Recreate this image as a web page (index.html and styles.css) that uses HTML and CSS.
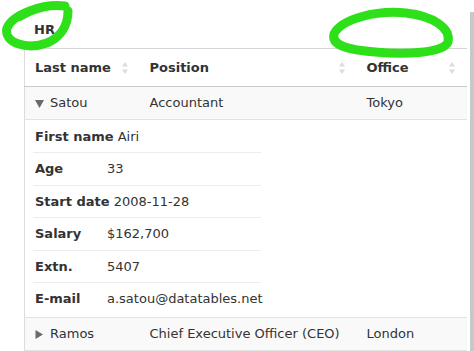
FILE: index.html
```html
<!DOCTYPE html>
<html>
<head>
<meta charset="utf-8">
<link rel="stylesheet" href="styles.css">
</head>
<body>
<div class="frame">
  <div class="content">
    <div class="title">HR</div>
    <table class="grid">
      <colgroup><col class="c1"><col class="c2"><col class="c3"></colgroup>
      <thead>
        <tr>
          <th><div class="th-in"><span>Last name</span><svg class="sort" width="6" height="12" viewBox="0 0 6 12"><path d="M3 0 L6 4.5 L0 4.5 Z M3 12 L6 7.5 L0 7.5 Z"/></svg></div></th>
          <th><div class="th-in"><span>Position</span><svg class="sort" width="6" height="12" viewBox="0 0 6 12"><path d="M3 0 L6 4.5 L0 4.5 Z M3 12 L6 7.5 L0 7.5 Z"/></svg></div></th>
          <th><div class="th-in"><span>Office</span><svg class="sort" width="6" height="12" viewBox="0 0 6 12"><path d="M3 0 L6 4.5 L0 4.5 Z M3 12 L6 7.5 L0 7.5 Z"/></svg></div></th>
        </tr>
      </thead>
      <tbody>
        <tr class="parent">
          <td><svg class="tog" width="9" height="8" viewBox="0 0 9 8"><path d="M0 0 L9 0 L4.5 8 Z"/></svg>Satou</td>
          <td>Accountant</td>
          <td>Tokyo</td>
        </tr>
        <tr class="child">
          <td colspan="3">
            <ul class="details">
              <li><b>First name</b>Airi</li>
              <li><b>Age</b>33</li>
              <li><b>Start date</b>2008-11-28</li>
              <li><b>Salary</b>$162,700</li>
              <li><b>Extn.</b>5407</li>
              <li><b>E-mail</b>a.satou@datatables.net</li>
            </ul>
          </td>
        </tr>
        <tr class="parent">
          <td><svg class="tog" width="9" height="9" viewBox="0 0 9 9"><path d="M0.5 0 L8 4.5 L0.5 9 Z"/></svg>Ramos</td>
          <td>Chief Executive Officer (CEO)</td>
          <td>London</td>
        </tr>
      </tbody>
    </table>
  </div>
  <div class="bar"></div>
</div>
<svg class="marks" width="474" height="351" viewBox="0 0 474 351">
  <path d="M65 6 C44 3 13 14 7 28 C3 43 27 50 47 43 C61 37 68 25 68 11" />
  <path class="thin" d="M20 19 C35 10 52 6 66 5" />
  <path d="M334 34 C341 19 376 10 406 13 C433 16 451 28 448 42 C444 53 405 55 375 52 C350 50 331 46 334 34 Z" />
</svg>
</body>
</html>
```

FILE: styles.css
```css
html, body {
  margin: 0;
  padding: 0;
  background: #fff;
}
body {
  font-family: "DejaVu Sans", Verdana, sans-serif;
  font-size: 13px;
  color: #333;
  position: relative;
  width: 474px;
  height: 351px;
  overflow: hidden;
}
.frame {
  display: flex;
  align-items: flex-start;
}
.content {
  flex: 0 0 442px;
  margin-left: 24px;
}
.bar {
  width: 5px;
  height: 339px;
  margin-top: 12px;
  margin-left: 3px;
  background: #c8c8c8;
}
.title {
  font-weight: bold;
  line-height: 16px;
  padding: 22px 10px 10px;
}
.grid {
  width: 442px;
  border-collapse: collapse;
  table-layout: fixed;
  border-left: 1px solid #dcdcdc;
}
.c1 { width: 115px; }
.c2 { width: 217px; }
.c3 { width: 110px; }
.grid th {
  text-align: left;
  font-weight: bold;
  line-height: 16px;
  padding: 11px 12px 10px 10px;
  border-top: 1px solid #d6d6d6;
  border-bottom: 1px solid #c9c9c9;
}
.th-in {
  display: flex;
  justify-content: space-between;
  align-items: center;
}
.sort {
  fill: #dcdcdc;
  display: block;
}
.grid td {
  line-height: 16px;
  padding: 8px 10px;
  white-space: nowrap;
}
.parent td {
  background: #f9f9f9;
  border-bottom: 1px solid #e2e2e2;
}
.tog {
  fill: #6a6a6a;
  margin-right: 6px;
  vertical-align: -1px;
}
.child td {
  padding: 1px 0 3px 8px;
  border-bottom: 1px solid #e2e2e2;
}
.details {
  list-style: none;
  margin: 0;
  padding: 0;
  width: 228px;
}
.details li {
  padding: 8px 2px;
  line-height: 15.4px;
  border-bottom: 1px solid #ececec;
}
.details li:last-child {
  border-bottom: none;
}
.details b {
  display: inline-block;
  min-width: 68px;
  margin-right: 4px;
  color: #333;
}
.marks {
  position: absolute;
  top: 0;
  left: 0;
  pointer-events: none;
  fill: none;
  stroke: #2ee01a;
  stroke-width: 9;
  stroke-linecap: round;
  stroke-linejoin: round;
}
.marks .thin {
  stroke-width: 4;
}
```
